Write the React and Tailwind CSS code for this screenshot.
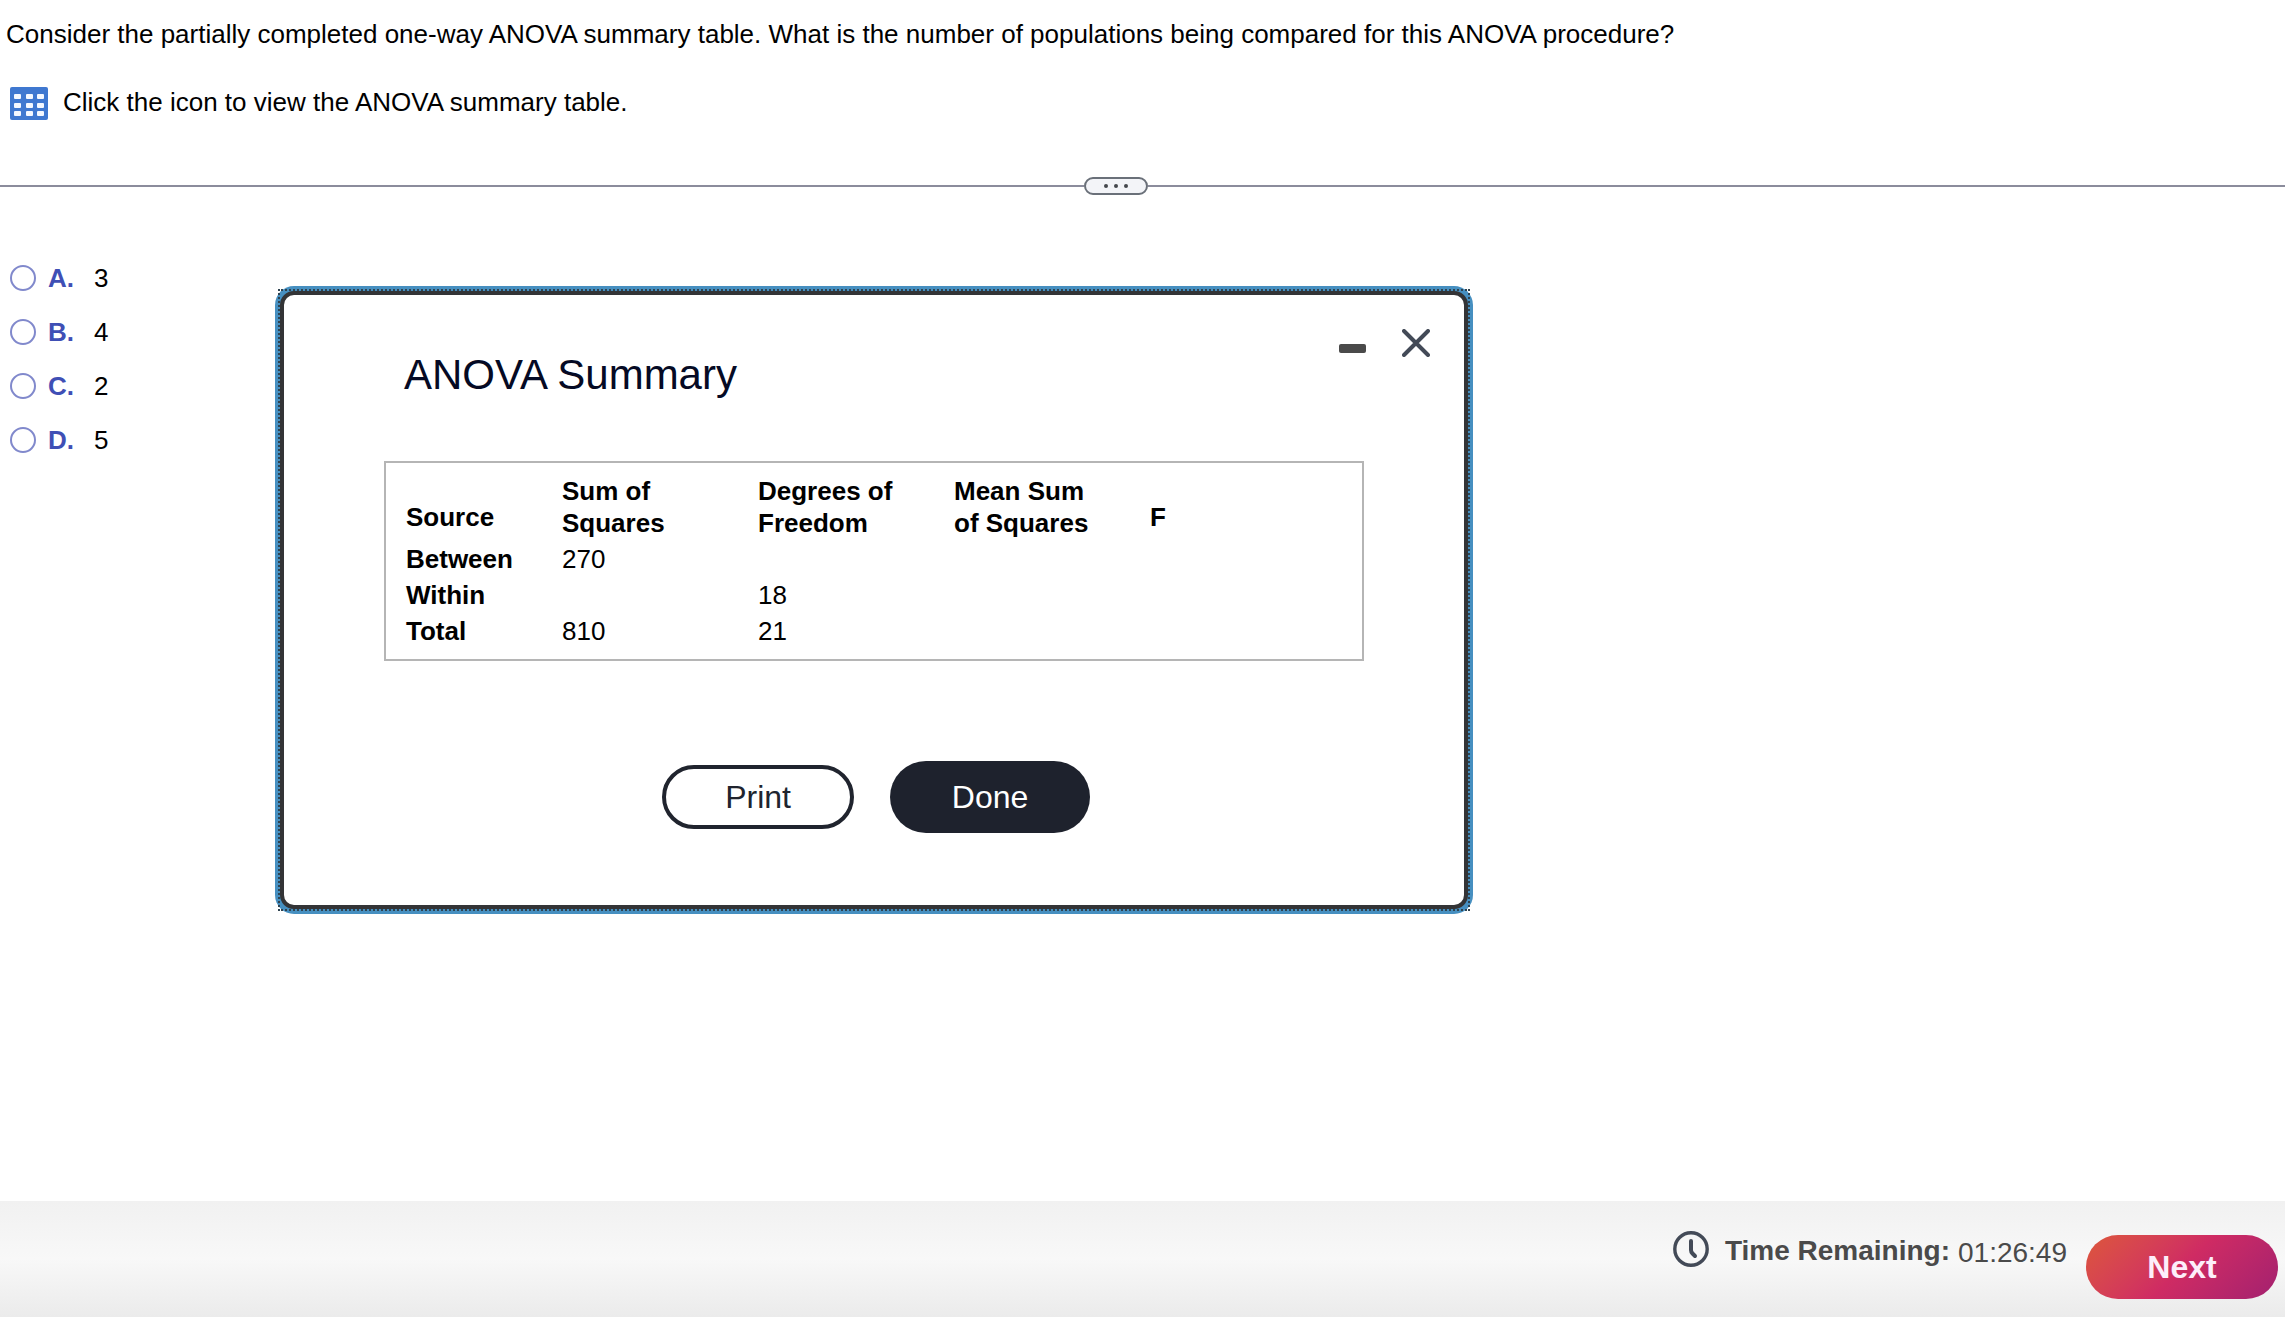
import React from "react";

const options = [
  { letter: "A", value: "3" },
  { letter: "B", value: "4" },
  { letter: "C", value: "2" },
  { letter: "D", value: "5" },
];

const rows = [
  { source: "Between", squares: "270", freedom: "" },
  { source: "Within", squares: "", freedom: "18" },
  { source: "Total", squares: "810", freedom: "21" },
];

function TableIcon() {
  return (
    <svg className="h-[33px] w-[38px]" viewBox="0 0 38 33" aria-hidden="true">
      <rect width="38" height="33" rx="2" fill="#3f78d0" />
      {[7, 16, 24].map((y) =>
        [4, 16, 27].map((x) => (
          <rect key={`${x}-${y}`} x={x} y={y} width="7" height="5" rx="1" fill="#f4f8ff" />
        ))
      )}
    </svg>
  );
}

function Question() {
  return (
    <header className="flex flex-col gap-9 pt-[18px] text-[26px] leading-8">
      <p className="px-1.5">
        Consider the partially completed one-way ANOVA summary table. What is the number of
        populations being compared for this ANOVA procedure?
      </p>
      <div className="flex h-8 items-start gap-[15px] pl-2.5">
        <button type="button" aria-label="View the ANOVA summary table" className="pt-px">
          <TableIcon />
        </button>
        <p>Click the icon to view the ANOVA summary table.</p>
      </div>
    </header>
  );
}

function Divider() {
  return (
    <div className="mt-[59px] flex items-center">
      <div className="h-0.5 w-[47.44%] bg-[#8b8c9c]" />
      <button
        type="button"
        aria-label="Resize panels"
        className="flex h-[18px] w-16 items-center justify-center gap-1.5 rounded-full border-2 border-[#6a7079] bg-[#f3f4f8]"
      >
        <span className="size-1 rounded-full bg-[#45474d]" />
        <span className="size-1 rounded-full bg-[#45474d]" />
        <span className="size-1 rounded-full bg-[#45474d]" />
      </button>
      <div className="h-0.5 flex-1 bg-[#8b8c9c]" />
    </div>
  );
}

function Options() {
  return (
    <div role="radiogroup" aria-label="Answer choices" className="mt-14 flex flex-col">
      {options.map(({ letter, value }) => (
        <label key={letter} className="flex h-[54px] items-center pl-2.5 text-[26px] leading-8">
          <input
            type="radio"
            name="answer"
            value={value}
            className="size-[26px] appearance-none rounded-full border-2 border-[#8189cc] bg-white checked:bg-[#3f4fb5]"
          />
          <span className="ml-3 w-[46px] font-bold text-[#3f4fb5]">{letter}.</span>
          <span>{value}</span>
        </label>
      ))}
    </div>
  );
}

function SummaryTable() {
  return (
    <div className="border-2 border-[#b5b5b5] px-5 pt-3 pb-2.5">
      <table className="w-full table-fixed text-left text-[26px] leading-8">
        <colgroup>
          <col className="w-[156px]" />
          <col className="w-[196px]" />
          <col className="w-[196px]" />
          <col className="w-[196px]" />
          <col />
        </colgroup>
        <thead>
          <tr className="align-bottom">
            <th scope="col" className="pb-2">Source</th>
            <th scope="col" className="pb-0.5">Sum of<br />Squares</th>
            <th scope="col" className="pb-0.5">Degrees of<br />Freedom</th>
            <th scope="col" className="pb-0.5">Mean Sum<br />of Squares</th>
            <th scope="col" className="pb-2">F</th>
          </tr>
        </thead>
        <tbody>
          {rows.map((row) => (
            <tr key={row.source} className="h-9">
              <th scope="row">{row.source}</th>
              <td>{row.squares}</td>
              <td>{row.freedom}</td>
              <td />
              <td />
            </tr>
          ))}
        </tbody>
      </table>
    </div>
  );
}

function SummaryDialog() {
  return (
    <div
      role="dialog"
      aria-labelledby="summary-title"
      className="absolute top-[291px] left-[280px] w-[52%] rounded-[14px] border-4 border-[#333436] bg-white px-[100px] pt-[34px] pb-[72px] shadow-[0_0_0_5px_#468fc0]"
    >
      <div className="pointer-events-none absolute -inset-1.5 border-2 border-dotted border-[#2f4350]" />
      <div className="-mr-[66px] flex items-start justify-between">
        <h2 id="summary-title" className="mt-5 pl-5 text-[42px] leading-[52px] text-[#050a24]">
          ANOVA Summary
        </h2>
        <div className="flex items-center gap-9">
          <button type="button" aria-label="Minimize" className="pt-2.5">
            <span className="block h-[9px] w-[27px] rounded-xs bg-[#4a4a4a]" />
          </button>
          <button type="button" aria-label="Close">
            <svg className="size-7" viewBox="0 0 28 28" aria-hidden="true">
              <path
                d="M2 2 26 26M26 2 2 26"
                stroke="#434a57"
                strokeWidth="4"
                strokeLinecap="round"
              />
            </svg>
          </button>
        </div>
      </div>
      <div className="mt-[60px]">
        <SummaryTable />
      </div>
      <div className="mt-[100px] flex items-center justify-center gap-9 pl-1 text-[32px] leading-10">
        <button
          type="button"
          className="h-16 w-48 rounded-full border-4 border-[#20242e] bg-white text-[#20242e]"
        >
          Print
        </button>
        <button type="button" className="h-[72px] w-[200px] rounded-full bg-[#1e222d] text-white">
          Done
        </button>
      </div>
    </div>
  );
}

function Footer() {
  return (
    <footer className="mt-auto flex h-[116px] items-start justify-end bg-linear-to-b from-[#f1f1f1] via-[#f8f8f8] to-[#ebebeb] pr-[7px] text-[#4a4a4a]">
      <svg className="mt-[30px] size-9" viewBox="0 0 36 36" fill="none" aria-hidden="true">
        <circle cx="18" cy="18" r="16.2" stroke="#434a57" strokeWidth="3.4" />
        <path
          d="M18 10v9q0 2 1.500 3.500l2.500 2.500"
          stroke="#434a57"
          strokeWidth="4"
          strokeLinecap="round"
          strokeLinejoin="round"
        />
      </svg>
      <p className="mt-[30px] ml-4 flex items-start gap-2 text-[28px] leading-10">
        <strong>Time Remaining:</strong>
        <span className="pt-0.5">01:26:49</span>
      </p>
      <button
        type="button"
        className="mt-[34px] ml-[19px] h-16 w-48 rounded-full bg-linear-135 from-[#dd5639] via-[#cf2b63] to-[#a3206f] text-[32px] leading-10 font-bold text-[#fdeefa]"
      >
        Next
      </button>
    </footer>
  );
}

export default function App() {
  return (
    <div className="relative flex min-h-screen flex-col bg-white font-['Liberation_Sans',Arial,sans-serif] text-black">
      <Question />
      <Divider />
      <Options />
      <SummaryDialog />
      <Footer />
    </div>
  );
}
